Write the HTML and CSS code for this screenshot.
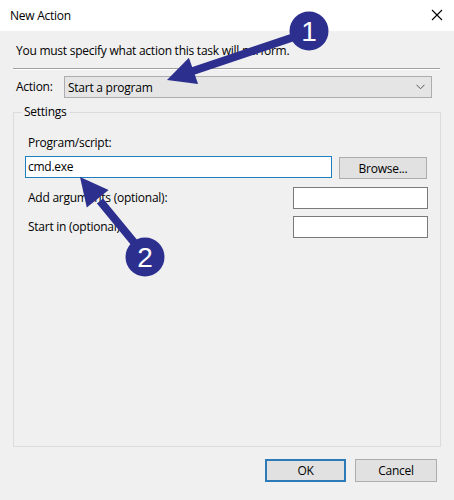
FILE: index.html
```html
<!DOCTYPE html>
<html>
<head>
<meta charset="utf-8">
<link rel="stylesheet" href="styles.css">
</head>
<body>
<div class="window">
  <div class="titlebar">
    <span class="title">New Action</span>
    <svg class="close" width="12" height="12" viewBox="0 0 12 12"><path d="M1 1 L11 11 M11 1 L1 11" stroke="#000" stroke-width="1.1" fill="none"/></svg>
  </div>
  <div class="content">
    <div class="instruction">You must specify what action this task will perform.</div>
    <div class="separator"></div>
    <div class="action-row">
      <span class="action-label">Action:</span>
      <div class="combo">
        <span>Start a program</span>
        <svg width="9" height="6" viewBox="0 0 9 6"><path d="M0.5 0.8 L4.5 4.8 L8.5 0.8" stroke="#555" stroke-width="1" fill="none"/></svg>
      </div>
    </div>
    <fieldset class="settings">
      <legend>Settings</legend>
      <div class="field-label prog-label">Program/script:</div>
      <div class="prog-row">
        <div class="input focused">cmd.exe</div>
        <div class="button browse">Browse...</div>
      </div>
      <div class="opt-row args-row">
        <span class="field-label">Add arguments (optional):</span>
        <div class="input small"></div>
      </div>
      <div class="opt-row start-row">
        <span class="field-label">Start in (optional):</span>
        <div class="input small"></div>
      </div>
    </fieldset>
    <div class="buttons">
      <div class="button ok">OK</div>
      <div class="button cancel">Cancel</div>
    </div>
  </div>
  <svg class="annotations" width="454" height="500" viewBox="0 0 454 500">
    <g fill="#2c2f8e">
      <line x1="300" y1="35" x2="190" y2="72" stroke="#2c2f8e" stroke-width="8"/>
      <polygon points="167,80 188.9,57.7 198.1,84.1"/>
      <circle cx="309" cy="31" r="19.5"/>
      <line x1="142" y1="252" x2="100" y2="201" stroke="#2c2f8e" stroke-width="8"/>
      <polygon points="80,177 108.6,190 86.8,207.6"/>
      <circle cx="145" cy="257" r="19.5"/>
    </g>
    <text x="309" y="41" class="num">1</text>
    <text x="145" y="267" class="num">2</text>
  </svg>
</div>
</body>
</html>
```
FILE: styles.css
```css
html, body {
  margin: 0;
  padding: 0;
}
body {
  width: 454px;
  height: 500px;
  overflow: hidden;
  font-family: "Open Sans", "Noto Sans", sans-serif;
  font-size: 12px;
  letter-spacing: -0.25px;
  color: #000;
}
.window {
  position: relative;
  width: 454px;
  height: 500px;
  display: flex;
  flex-direction: column;
  background: #f0f0f0;
}
.titlebar {
  height: 31px;
  flex: none;
  background: #fff;
  display: flex;
  align-items: center;
  justify-content: space-between;
  padding: 0 11px 0 10px;
}
.title {
  line-height: 16px;
  padding-top: 1px;
}
.close {
  display: block;
  margin-top: -1px;
}
.content {
  flex: 1;
  display: flex;
  flex-direction: column;
  padding: 12px 14px 0 13px;
}
.instruction {
  line-height: 16px;
  padding-left: 3px;
}
.separator {
  margin-top: 9px;
  height: 0;
  border-top: 1px solid #a0a0a0;
  border-bottom: 1px solid #fff;
}
.action-row {
  display: flex;
  align-items: center;
  margin-top: 6px;
  padding-left: 3px;
}
.action-label {
  width: 48px;
  line-height: 16px;
}
.combo {
  box-sizing: border-box;
  width: 368px;
  height: 22px;
  background: #e5e5e5;
  border: 1px solid #adadad;
  display: flex;
  align-items: center;
  justify-content: space-between;
  padding: 0 6px 0 3px;
}
.settings {
  margin: 6px 0 0 0;
  padding: 0 12px 0 11px;
  border: 1px solid #dcdcdc;
  height: 343px;
  box-sizing: border-box;
}
.settings legend {
  padding: 0 2px;
  margin-left: -3px;
  line-height: 16px;
}
.field-label {
  line-height: 16px;
}
.prog-label {
  margin-top: 15px;
  padding-left: 3px;
}
.prog-row {
  display: flex;
  align-items: flex-start;
  margin-top: 5px;
}
.input {
  box-sizing: border-box;
  height: 22px;
  background: #fff;
  border: 1px solid #7a7a7a;
  line-height: 20px;
  padding-left: 2px;
}
.input.focused {
  width: 307px;
  border-color: #1f7dc0;
}
.button {
  box-sizing: border-box;
  height: 22px;
  background: #e1e1e1;
  border: 1px solid #adadad;
  display: flex;
  align-items: center;
  justify-content: center;
}
.browse {
  width: 88px;
  margin-left: 7px;
  margin-top: 1px;
}
.opt-row {
  box-sizing: border-box;
  display: flex;
  align-items: center;
  justify-content: space-between;
  padding-left: 3px;
  width: 403px;
}
.args-row {
  margin-top: 8px;
}
.start-row {
  margin-top: 7px;
}
.input.small {
  width: 135px;
}
.buttons {
  display: flex;
  justify-content: flex-end;
  gap: 9px;
  margin-top: 12px;
  padding-right: 3px;
}
.ok {
  width: 81px;
  height: 23px;
  border: 2px solid #2c7ab8;
}
.cancel {
  width: 82px;
  height: 23px;
}
.annotations {
  position: absolute;
  left: 0;
  top: 0;
  pointer-events: none;
}
.num {
  fill: #fff;
  font-family: "Liberation Sans", Arial, sans-serif;
  font-size: 28px;
  letter-spacing: 0;
  text-anchor: middle;
}
```
